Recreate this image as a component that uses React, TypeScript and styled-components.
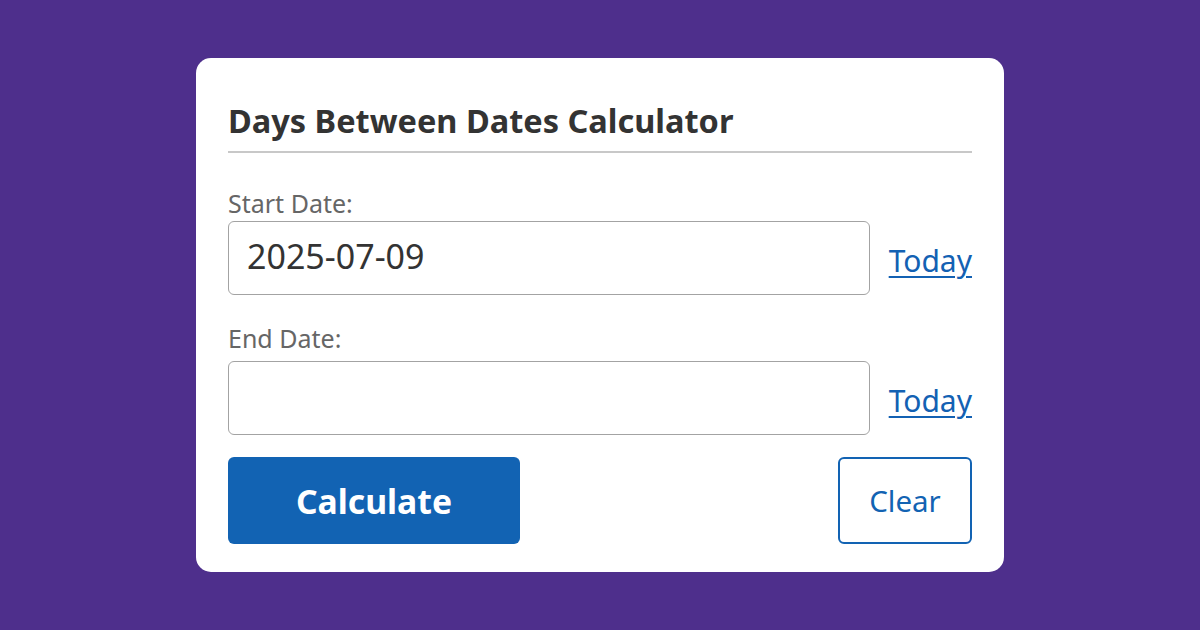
import React from "react";
import styled, { createGlobalStyle } from "styled-components";

const Global = createGlobalStyle`
  html, body { margin: 0; padding: 0; }
  body {
    width: 1200px; height: 630px;
    background: #4e2f8c;
    font-family: "Noto Sans", "Open Sans", sans-serif;
  }
`;

const Page = styled.div`
  width: 1200px;
  height: 630px;
  display: flex;
  justify-content: center;
  align-items: flex-start;
  padding-top: 58px;
  box-sizing: border-box;
`;

const Card = styled.div`
  width: 808px;
  height: 514px;
  box-sizing: border-box;
  background: #fff;
  border-radius: 15px;
  padding: 41px 32px 0 32px;
  display: flex;
  flex-direction: column;
`;

const Title = styled.h1`
  margin: 0;
  font-size: 32.5px;
  font-weight: 700;
  color: #333;
  line-height: 44px;
  padding-bottom: 8px;
  border-bottom: 2px solid #c8c8c8;
`;

const Field = styled.div<{ $top: number }>`
  margin-top: ${(p) => p.$top}px;
  display: flex;
  flex-direction: column;
`;

const Label = styled.label<{ $gap: number }>`
  font-size: 25px;
  color: #666;
  line-height: 30px;
  margin-bottom: ${(p) => p.$gap}px;
`;

const Row = styled.div`
  display: flex;
  align-items: center;
  gap: 19px;
`;

const Input = styled.div`
  width: 642px;
  height: 74px;
  box-sizing: border-box;
  border: 1.5px solid #a3a3a3;
  border-radius: 6px;
  display: flex;
  align-items: center;
  padding-left: 18px;
  padding-bottom: 4px;
  font-size: 34px;
  color: #333;
`;

const Link = styled.a`
  font-size: 30px;
  color: #1361b3;
  text-decoration: underline;
  text-underline-offset: 4px;
  text-decoration-thickness: 2px;
  padding-top: 5px;
`;

const Buttons = styled.div`
  margin-top: 22px;
  display: flex;
  justify-content: space-between;
`;

const Primary = styled.button`
  width: 292px;
  height: 87px;
  border: none;
  border-radius: 6px;
  background: #1263b3;
  color: #fff;
  font-family: inherit;
  font-size: 33.7px;
  font-weight: 700;
  padding: 0;
`;

const Secondary = styled.button`
  width: 134px;
  height: 87px;
  box-sizing: border-box;
  border: 2px solid #1263b3;
  border-radius: 6px;
  background: #fff;
  color: #1263b3;
  font-family: inherit;
  font-size: 29.5px;
  padding: 0;
`;

export default function App() {
  return (
    <>
      <Global />
      <Page>
        <Card>
          <Title>Days Between Dates Calculator</Title>
          <Field $top={35}>
            <Label $gap={3}>Start Date:</Label>
            <Row>
              <Input>2025-07-09</Input>
              <Link>Today</Link>
            </Row>
          </Field>
          <Field $top={28}>
            <Label $gap={8}>End Date:</Label>
            <Row>
              <Input />
              <Link>Today</Link>
            </Row>
          </Field>
          <Buttons>
            <Primary>Calculate</Primary>
            <Secondary>Clear</Secondary>
          </Buttons>
        </Card>
      </Page>
    </>
  );
}
